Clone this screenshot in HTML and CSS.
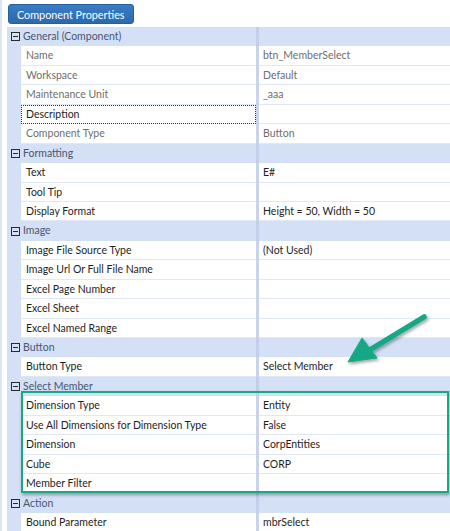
FILE: index.html
```html
<!DOCTYPE html>
<html>
<head>
<meta charset="utf-8">
<link rel="stylesheet" href="styles.css">
</head>
<body>
<div class="page">
  <div class="toolbar"><div class="btn">Component Properties</div></div>
  <div class="grid">
    <div class="row group"><div class="indent"><span class="minus"></span></div><div class="label">General (Component)</div><div class="div"></div><div class="value"></div></div>
    <div class="row"><div class="indent"></div><div class="label ro">Name</div><div class="div"></div><div class="value ro">btn_MemberSelect</div></div>
    <div class="row"><div class="indent"></div><div class="label ro">Workspace</div><div class="div"></div><div class="value ro">Default</div></div>
    <div class="row"><div class="indent"></div><div class="label ro">Maintenance Unit</div><div class="div"></div><div class="value ro">_aaa</div></div>
    <div class="row"><div class="indent"></div><div class="label focus">Description</div><div class="div"></div><div class="value"></div></div>
    <div class="row"><div class="indent"></div><div class="label ro">Component Type</div><div class="div"></div><div class="value ro">Button</div></div>
    <div class="row group"><div class="indent"><span class="minus"></span></div><div class="label">Formatting</div><div class="div"></div><div class="value"></div></div>
    <div class="row"><div class="indent"></div><div class="label">Text</div><div class="div"></div><div class="value">E#</div></div>
    <div class="row"><div class="indent"></div><div class="label">Tool Tip</div><div class="div"></div><div class="value"></div></div>
    <div class="row"><div class="indent"></div><div class="label">Display Format</div><div class="div"></div><div class="value">Height = 50, Width = 50</div></div>
    <div class="row group"><div class="indent"><span class="minus"></span></div><div class="label">Image</div><div class="div"></div><div class="value"></div></div>
    <div class="row"><div class="indent"></div><div class="label">Image File Source Type</div><div class="div"></div><div class="value">(Not Used)</div></div>
    <div class="row"><div class="indent"></div><div class="label">Image Url Or Full File Name</div><div class="div"></div><div class="value"></div></div>
    <div class="row"><div class="indent"></div><div class="label">Excel Page Number</div><div class="div"></div><div class="value"></div></div>
    <div class="row"><div class="indent"></div><div class="label">Excel Sheet</div><div class="div"></div><div class="value"></div></div>
    <div class="row"><div class="indent"></div><div class="label">Excel Named Range</div><div class="div"></div><div class="value"></div></div>
    <div class="row group"><div class="indent"><span class="minus"></span></div><div class="label">Button</div><div class="div"></div><div class="value"></div></div>
    <div class="row"><div class="indent"></div><div class="label">Button Type</div><div class="div"></div><div class="value">Select Member</div></div>
    <div class="row group"><div class="indent"><span class="minus"></span></div><div class="label">Select Member</div><div class="div"></div><div class="value"></div></div>
    <div class="row"><div class="indent"></div><div class="label">Dimension Type</div><div class="div"></div><div class="value">Entity</div></div>
    <div class="row"><div class="indent"></div><div class="label">Use All Dimensions for Dimension Type</div><div class="div"></div><div class="value">False</div></div>
    <div class="row"><div class="indent"></div><div class="label">Dimension</div><div class="div"></div><div class="value">CorpEntities</div></div>
    <div class="row"><div class="indent"></div><div class="label">Cube</div><div class="div"></div><div class="value">CORP</div></div>
    <div class="row"><div class="indent"></div><div class="label">Member Filter</div><div class="div"></div><div class="value"></div></div>
    <div class="row group"><div class="indent"><span class="minus"></span></div><div class="label">Action</div><div class="div"></div><div class="value"></div></div>
    <div class="row"><div class="indent"></div><div class="label">Bound Parameter</div><div class="div"></div><div class="value">mbrSelect</div></div>
  </div>
  <div class="highlight"></div>
  <svg class="arrow" width="100" height="70" viewBox="0 0 100 70">
    <defs>
      <filter id="sh" x="-20%" y="-20%" width="150%" height="150%">
        <feDropShadow dx="1.5" dy="2" stdDeviation="1.5" flood-color="#000" flood-opacity="0.35"/>
      </filter>
    </defs>
    <g filter="url(#sh)" fill="#17a884" stroke="#17a884">
      <line x1="84" y1="8" x2="28" y2="42" stroke-width="5.5" stroke-linecap="round"/>
      <polygon points="8,53 22,29 37,49" stroke-width="1" stroke-linejoin="round"/>
    </g>
  </svg>
</div>
</body>
</html>
```
FILE: styles.css
```css
html, body {
  margin: 0;
  padding: 0;
  background: #ffffff;
}
body {
  font-family: Lato, "Open Sans", sans-serif;
  font-size: 10.5px;
  color: #1e1e1e;
}
.page {
  position: relative;
  width: 450px;
  height: 531px;
  overflow: hidden;
  border-left: 2px solid #dde4f2;
  box-sizing: border-box;
}
.toolbar {
  padding: 4px 0 0 6px;
  height: 27px;
  box-sizing: border-box;
}
.btn {
  display: inline-block;
  background: linear-gradient(#3a7cc4, #2b69b0);
  color: #fff;
  border: 1px solid #245f9f;
  border-radius: 3px;
  padding: 0 8px;
  height: 20px;
  line-height: 19px;
  box-sizing: border-box;
  font-size: 10.8px;
}
.grid {
  margin-top: 0;
  margin-left: 5px;
}
.row {
  display: flex;
  height: 19.44px;
  box-sizing: border-box;
  line-height: 18px;
  white-space: nowrap;
}
.indent {
  flex: 0 0 14px;
  background: #d4e0f6;
  display: flex;
  align-items: center;
  justify-content: center;
}
.label {
  flex: 0 0 235px;
  padding-left: 5px;
  box-sizing: border-box;
  border-bottom: 1.5px solid #e1e8f5;
  overflow: hidden;
}
.div {
  flex: 0 0 3px;
  background: #c9d4eb;
}
.value {
  flex: 1;
  padding-left: 4px;
  border-bottom: 1.5px solid #e1e8f5;
}
.ro {
  color: #6e6e6e;
}
.focus {
  border: 1px dotted #333;
  padding-left: 4px;
  line-height: 17px;
}
.group {
  background: #d4e0f6;
}
.group .label {
  color: #4a5670;
  padding-left: 2px;
  border-bottom: none;
}
.group .value {
  border-bottom: none;
}
.group .div {
  background: #c2cfe8;
}
.minus {
  width: 7px;
  height: 7px;
  border: 1px solid #2b2b2b;
  position: relative;
  margin-left: 2px;
}
.minus::after {
  content: "";
  position: absolute;
  left: 1px;
  right: 1px;
  top: 3px;
  height: 1px;
  background: #2b2b2b;
}
.highlight {
  position: absolute;
  left: 19px;
  top: 391px;
  width: 428px;
  height: 102px;
  box-sizing: border-box;
  border: 2.5px solid #17a884;
  box-shadow: 1px 2px 3px rgba(0,0,0,0.35);
}
.arrow {
  position: absolute;
  left: 338px;
  top: 309px;
}
```
